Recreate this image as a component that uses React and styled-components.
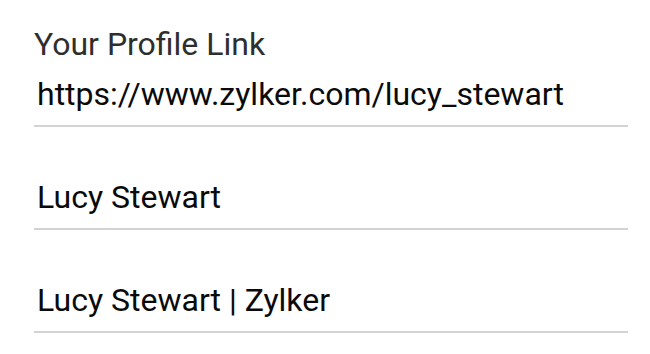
import React from "react";
import styled, { createGlobalStyle } from "styled-components";

const Global = createGlobalStyle`
  html, body { margin: 0; padding: 0; background: #ffffff; }
  body { font-family: Roboto, "Noto Sans", "Liberation Sans", sans-serif; }
`;

const Page = styled.div`
  width: 650px;
  height: 354px;
  padding: 26px 22px 0 34px;
  box-sizing: border-box;
  display: flex;
  flex-direction: column;
  overflow: hidden;
`;

const Label = styled.div`
  font-size: 32px;
  line-height: 36px;
  color: #2e2e2e;
`;

const Field = styled.div`
  font-size: 32px;
  line-height: 36px;
  color: #0a0a0a;
  padding: ${(p) => (p.$first ? "14px" : "52px")} 0 13px 3px;
  border-bottom: 2px solid #d3d3d3;
  white-space: nowrap;
`;

const fields = [
  "https://www.zylker.com/lucy_stewart",
  "Lucy Stewart",
  "Lucy Stewart | Zylker",
];

export default function App() {
  return (
    <>
      <Global />
      <Page>
        <Label>Your Profile Link</Label>
        {fields.map((v, i) => (
          <Field key={v} $first={i === 0}>
            {v}
          </Field>
        ))}
      </Page>
    </>
  );
}
